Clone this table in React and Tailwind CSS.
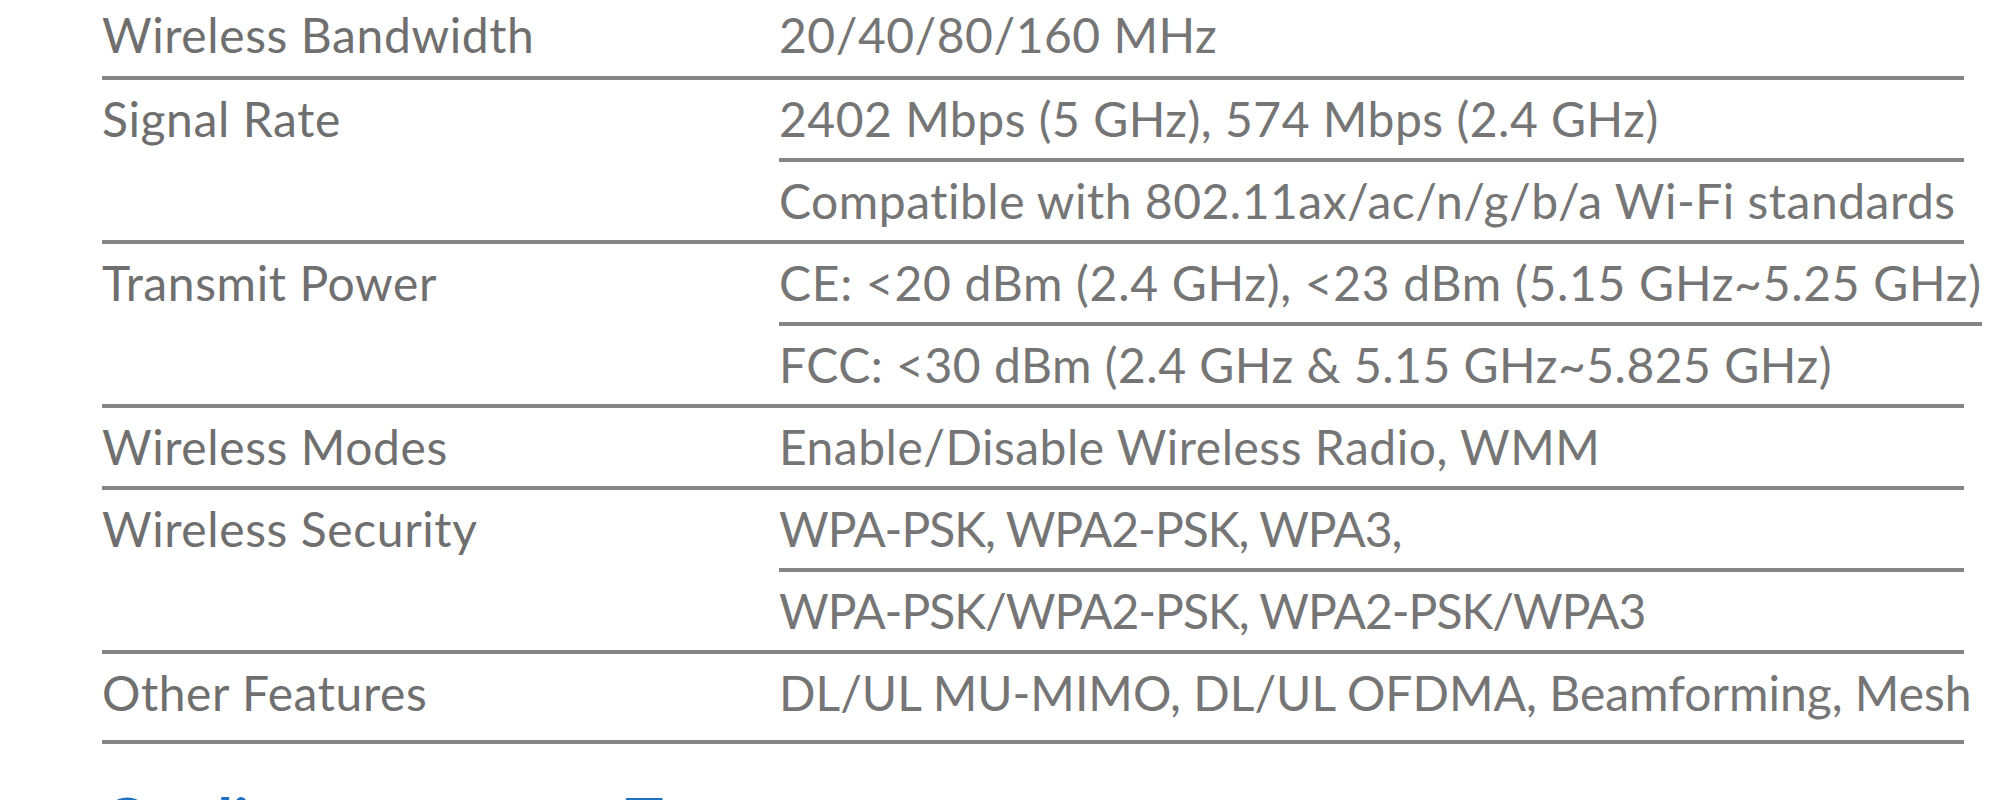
import React from 'react';

const specs = [
  { label: 'Wireless Bandwidth', values: ['20/40/80/160 MHz'] },
  {
    label: 'Signal Rate',
    values: ['2402 Mbps (5 GHz), 574 Mbps (2.4 GHz)', 'Compatible with 802.11ax/ac/n/g/b/a Wi-Fi standards'],
  },
  {
    label: 'Transmit Power',
    values: ['CE: <20 dBm (2.4 GHz), <23 dBm (5.15 GHz~5.25 GHz)', 'FCC: <30 dBm (2.4 GHz & 5.15 GHz~5.825 GHz)'],
    tracks: ['tracking-[0.7px]', 'tracking-[0.5px]'],
  },
  { label: 'Wireless Modes', values: ['Enable/Disable Wireless Radio, WMM'] },
  {
    label: 'Wireless Security',
    values: ['WPA-PSK, WPA2-PSK, WPA3,', 'WPA-PSK/WPA2-PSK, WPA2-PSK/WPA3'],
    tracks: ['tracking-[-1px]', 'tracking-[-1px]'],
  },
  {
    label: 'Other Features',
    values: ['DL/UL MU-MIMO, DL/UL OFDMA, Beamforming, Mesh'],
    tracks: ['tracking-[0px]'],
    last: true,
  },
];

export default function App() {
  return (
    <div className="w-[2000px] h-[800px] overflow-hidden bg-white font-['Lato',sans-serif]">
      <div className="w-[1964px] pl-[102px] -mt-1">
        {specs.map((row, r) => (
          <div key={row.label} className="flex border-b-4 border-[#858585]">
            <div className="w-[677px] shrink-0 text-[48px] leading-[77px] tracking-[0.6px] text-[#6f6f6f] whitespace-nowrap">
              {row.label}
            </div>
            <div className="flex-1">
              {row.values.map((v, i) => {
                let h = 'h-[78px]';
                if (i > 0) h = 'border-t-4 border-[#858585] h-[82px]';
                else if (row.last) h = 'h-[86px]';
                else if (r === 0) h = 'h-[80px]';
                const track = row.tracks ? row.tracks[i] : 'tracking-[0.5px]';
                return (
                  <div key={i} className={`${h} ${track} text-[48px] leading-[77px] text-[#757575] whitespace-nowrap`}>
                    {v}
                  </div>
                );
              })}
            </div>
          </div>
        ))}
        {/* next section heading, cut off by the bottom edge */}
        <h2 className="flex mt-[36px] text-[64px] leading-[80px] font-bold text-[#1f72c2]">
          <span className="w-[523px]">Cooling</span>
          <span>Type</span>
        </h2>
      </div>
    </div>
  );
}
